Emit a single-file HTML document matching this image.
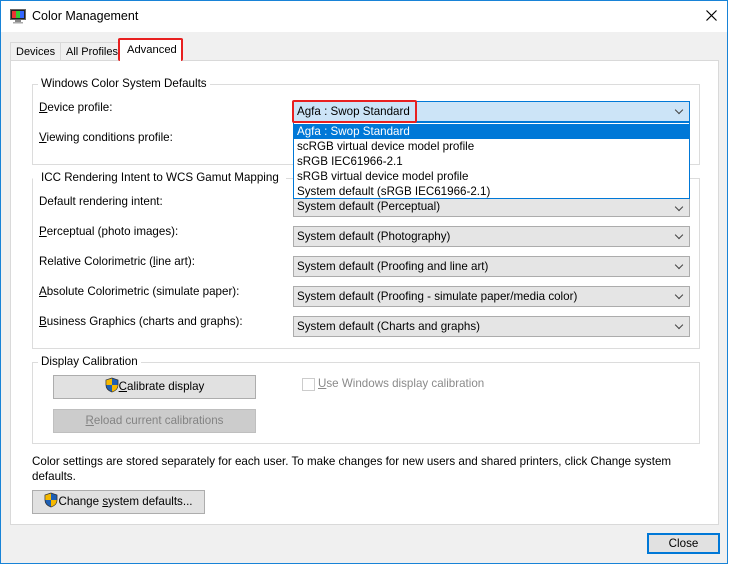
<!DOCTYPE html>
<html><head><style>
*{margin:0;padding:0;box-sizing:border-box}
body{width:730px;height:565px;background:#fff;font-family:"Liberation Sans",sans-serif;font-size:11.6px;color:#000;position:relative;overflow:hidden}
.a{position:absolute;white-space:nowrap}
.win{position:absolute;left:0;top:0;width:728px;height:564px;border:1px solid #1883d7;background:#f0f0f0}
.title{position:absolute;left:0;top:0;width:726px;height:31px;background:#fff}
.grp{position:absolute;border:1px solid #dcdcdc}
.lg{position:absolute;background:#fff;padding:0 3px;top:-8px;left:5px;line-height:14px}
.cb{position:absolute;left:293px;width:397px;height:21px;background:#e5e5e5;border:1px solid #acacac;padding-left:3px;line-height:19px}
.cb:after{content:"";position:absolute;right:7px;top:5px;width:5px;height:5px;border-right:1px solid #444;border-bottom:1px solid #444;transform:rotate(45deg)}
.btn{position:absolute;background:#e1e1e1;border:1px solid #adadad;text-align:center;line-height:21px}
u{text-decoration:underline}
</style></head><body>
<div class="win">
<div class="title"></div>
</div>
<svg class="a" style="left:10px;top:9px" width="16" height="15" viewBox="0 0 16 15"><rect x="0.5" y="0.5" width="15" height="10" fill="#222" stroke="#666"/><rect x="2" y="2" width="4" height="7" fill="#e33"/><rect x="6" y="2" width="4" height="7" fill="#3c3"/><rect x="10" y="2" width="4" height="7" fill="#36f"/><rect x="5" y="11" width="6" height="2" fill="#888"/><rect x="3" y="13" width="10" height="1.5" fill="#aaa"/></svg>
<div class="a" style="left:32px;top:9px;font-size:12.5px">Color Management</div>
<svg class="a" style="left:706px;top:10px" width="11" height="11"><path d="M0.5 0.5L10.5 10.5M10.5 0.5L0.5 10.5" stroke="#000" stroke-width="1.2"/></svg>
<!-- tabs -->
<div class="a" style="left:10px;top:42px;width:51px;height:19px;border:1px solid #d9d9d9;border-bottom:none;background:#f0f0f0;padding-left:5px;line-height:18px;font-size:11px">Devices</div>
<div class="a" style="left:60px;top:42px;width:59px;height:19px;border:1px solid #d9d9d9;border-bottom:none;background:#f0f0f0;padding-left:5px;line-height:18px;font-size:11px">All Profiles</div>
<div class="a" style="left:10px;top:60px;width:709px;height:465px;background:#fff;border:1px solid #d9d9d9"></div>
<div class="a" style="left:118px;top:38px;width:65px;height:23px;background:#fff;border:2px solid #e82020;border-bottom:none;border-radius:2px;padding-left:7px;line-height:20px;font-size:11.2px">Advanced</div>
<!-- group1 -->
<div class="grp" style="left:32px;top:84px;width:668px;height:81px"><div class="lg">Windows Color System Defaults</div></div>
<div class="a" style="left:39px;top:101px"><u>D</u>evice profile:</div>
<div class="a" style="left:39px;top:131px"><u>V</u>iewing conditions profile:</div>
<!-- group2 -->
<div class="grp" style="left:32px;top:178px;width:668px;height:171px;border-top-color:transparent"><div class="lg">ICC Rendering Intent to WCS Gamut Mapping</div></div>
<div class="a" style="left:286px;top:178px;width:414px;height:1px;background:#dcdcdc"></div>
<div class="a" style="left:39px;top:195px">Default rendering intent:</div>
<div class="a" style="left:39px;top:225px"><u>P</u>erceptual (photo images):</div>
<div class="a" style="left:39px;top:255px">Relative Colorimetric (<u>l</u>ine art):</div>
<div class="a" style="left:39px;top:285px"><u>A</u>bsolute Colorimetric (simulate paper):</div>
<div class="a" style="left:39px;top:315px"><u>B</u>usiness Graphics (charts and graphs):</div>
<div class="cb" style="top:199px;height:18px;line-height:15px;border-top:none">System default (Perceptual)</div>
<div class="cb" style="top:226px">System default (Photography)</div>
<div class="cb" style="top:256px">System default (Proofing and line art)</div>
<div class="cb" style="top:286px">System default (Proofing - simulate paper/media color)</div>
<div class="cb" style="top:316px">System default (Charts and graphs)</div>
<!-- combo + dropdown on top -->
<div class="cb" style="top:101px;background:#cce4f7;border-color:#0078d7;z-index:5">Agfa : Swop Standard</div>
<div class="a" style="left:292px;top:100px;width:125px;height:23px;border:2px solid #e82020;border-radius:2px;z-index:6"></div>
<div class="a" style="left:293px;top:122px;width:397px;height:77px;background:#fff;border:1px solid #0078d7;line-height:15px;padding-top:1px;z-index:5">
<div style="background:#0078d7;color:#fff;padding-left:3px">Agfa : Swop Standard</div>
<div style="padding-left:3px">scRGB virtual device model profile</div>
<div style="padding-left:3px">sRGB IEC61966-2.1</div>
<div style="padding-left:3px">sRGB virtual device model profile</div>
<div style="padding-left:3px">System default (sRGB IEC61966-2.1)</div>
</div>
<!-- group3 -->
<div class="grp" style="left:32px;top:362px;width:668px;height:82px"><div class="lg">Display Calibration</div></div>
<div class="btn" style="left:53px;top:375px;width:203px;height:24px"><svg width="14" height="16" viewBox="0 0 14 16" style="vertical-align:-3px"><path d="M7 1L1 3V8C1 12 4 14 7 15C10 14 13 12 13 8V3Z" fill="#1e5fb4" stroke="#333" stroke-width="0.8"/><path d="M7 1.5V8H1.3V3.3ZM7 8H12.7C12.6 12 10 13.8 7 14.6Z" fill="#f5b800"/></svg><u>C</u>alibrate display</div>
<div class="btn" style="left:53px;top:409px;width:203px;height:24px;background:#cccccc;border-color:#bfbfbf;color:#838383"><u>R</u>eload current calibrations</div>
<div class="a" style="left:302px;top:378px;width:13px;height:13px;border:1px solid #ccc;background:#fff"></div>
<div class="a" style="left:318px;top:377px;color:#8a8a8a"><u>U</u>se Windows display calibration</div>
<div class="a" style="left:32px;top:455px">Color settings are stored separately for each user. To make changes for new users and shared printers, click Change system</div>
<div class="a" style="left:32px;top:470px">defaults.</div>
<div class="btn" style="left:32px;top:490px;width:173px;height:24px"><svg width="14" height="16" viewBox="0 0 14 16" style="vertical-align:-3px"><path d="M7 1L1 3V8C1 12 4 14 7 15C10 14 13 12 13 8V3Z" fill="#1e5fb4" stroke="#333" stroke-width="0.8"/><path d="M7 1.5V8H1.3V3.3ZM7 8H12.7C12.6 12 10 13.8 7 14.6Z" fill="#f5b800"/></svg>Change <u>s</u>ystem defaults...</div>
<div class="btn" style="left:647px;top:533px;width:73px;height:21px;border:2px solid #0078d7;line-height:18px">Close</div>
</body></html>
